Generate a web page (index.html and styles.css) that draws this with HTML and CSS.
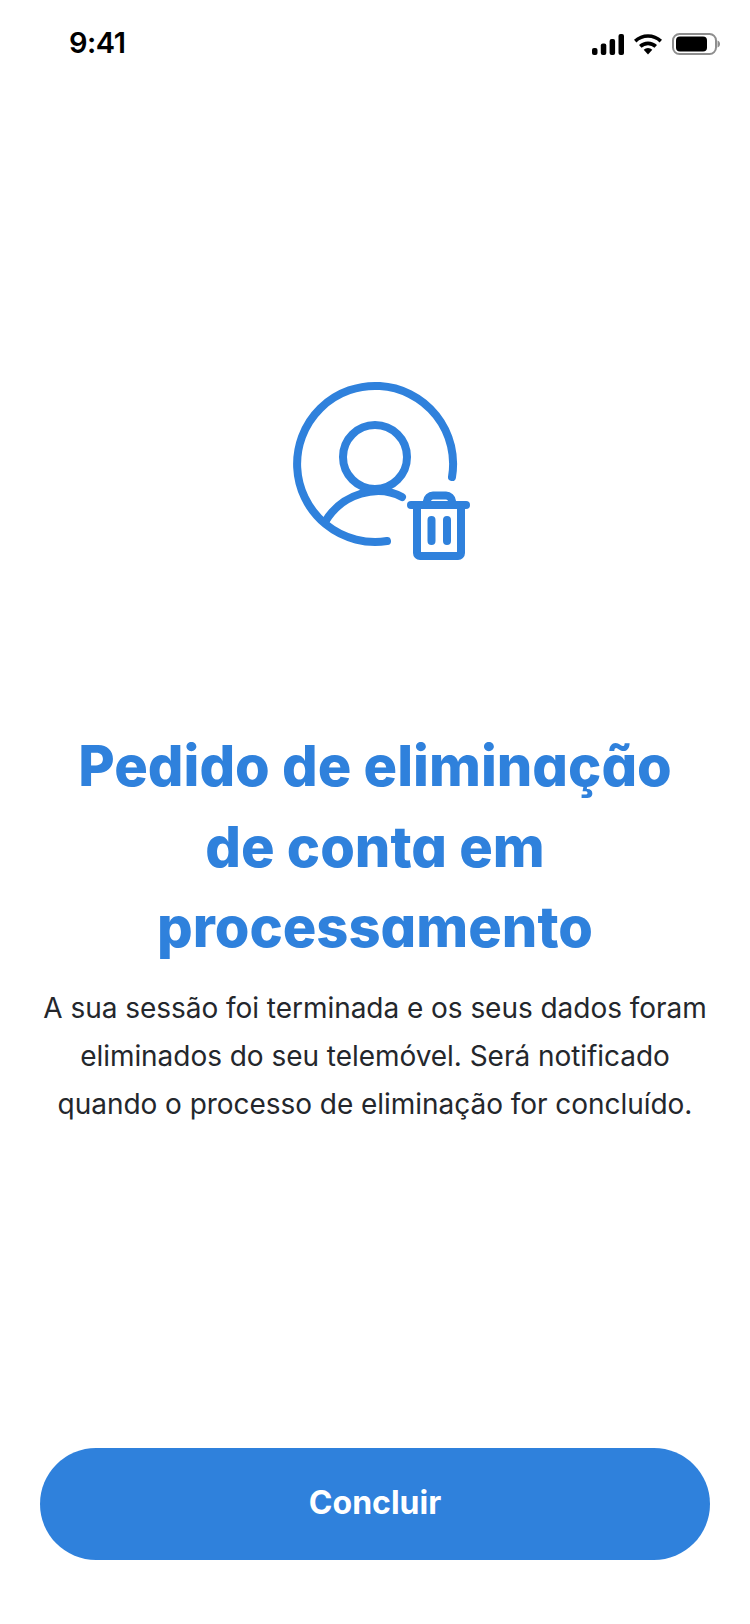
FILE: index.html
```html
<!DOCTYPE html>
<html lang="pt">
<head>
<meta charset="utf-8">
<title>Pedido de eliminação</title>
<link rel="stylesheet" href="styles.css">
</head>
<body>
<div class="screen">
  <header class="status">
    <span class="time">9:41</span>
    <div class="status-icons">
      <svg class="signal" width="32" height="21" viewBox="0 0 32 21"><rect x="0" y="14" width="5.500" height="7" rx="2"/><rect x="8.800" y="9.500" width="5.500" height="11.500" rx="2"/><rect x="17.600" y="5" width="5.500" height="16" rx="2"/><rect x="26.500" y="0" width="5.500" height="21" rx="2"/></svg>
      <svg class="wifi" width="28" height="22" viewBox="0 0 28 22"><path d="M14 21.500l-4.300-4.700a6.200 6.200 0 0 1 8.600 0z"/><path d="M0 6.800a20.400 20.400 0 0 1 28 0l-2.400 2.600a17 17 0 0 0-23.200 0z"/><path d="M5 12a13.200 13.200 0 0 1 18 0l-2.500 2.700a9.500 9.500 0 0 0-13 0z"/></svg>
      <svg class="battery" width="48" height="22" viewBox="0 0 48 22"><rect x="1" y="1" width="43" height="20" rx="6.500" fill="none" stroke="#8e8e8e" stroke-width="2"/><rect x="4" y="3.500" width="31" height="15" rx="4"/><path d="M45.500 7.500c1.500.4 2.500 1.800 2.500 3.500s-1 3.100-2.500 3.500z" fill="#8e8e8e"/></svg>
    </div>
  </header>
  <main class="content">
    <svg class="hero" width="210" height="210" viewBox="270 360 210 210" fill="none" stroke="#2f81dc" stroke-width="8" stroke-linecap="round" stroke-linejoin="round">
      <path d="M452 477A78 78 0 1 0 387 541"/>
      <circle cx="375" cy="457" r="32"/>
      <path d="M325 522C342 493 378 484 402 497"/>
      <path d="M411 505H466"/>
      <path d="M417 505V553A3 3 0 0 0 420 556H458A3 3 0 0 0 461 553V505"/>
      <path d="M427 505V501A6 6 0 0 1 433 495.500H446A6 6 0 0 1 452 501V505"/>
      <path d="M431.500 520V541M447 520V541"/>
    </svg>
    <h1 class="title">Pedido de eliminação<br>de conta em<br>processamento</h1>
    <p class="text">A sua sessão foi terminada e os seus dados foram<br>eliminados do seu telemóvel. Será notificado<br>quando o processo de eliminação for concluído.</p>
  </main>
  <button class="cta">Concluir</button>
</div>
</body>
</html>
```
FILE: styles.css
```css
* { box-sizing: border-box; }
html, body { margin: 0; padding: 0; background: #fff; }
.screen {
  width: 750px;
  height: 1624px;
  display: flex;
  flex-direction: column;
  font-family: Inter, "Liberation Sans", sans-serif;
  overflow: hidden;
}
.status {
  height: 88px;
  flex: none;
  display: flex;
  justify-content: space-between;
  align-items: flex-start;
  padding: 25px 30px 0 69px;
}
.time { font-size: 29px; font-weight: 600; line-height: 36px; letter-spacing: -0.5px; color: #000; }
.status-icons { display: flex; align-items: center; gap: 10px; padding-top: 8px; }
.status-icons svg { display: block; fill: #000; }
.content {
  flex: 1;
  display: flex;
  flex-direction: column;
  align-items: center;
  padding-top: 272px;
}
.hero { display: block; }
.title {
  margin: 156px 0 0;
  font-size: 56px;
  font-weight: 800;
  line-height: 80.5px;
  color: #2f81dc;
  text-align: center;
  font-feature-settings: "cv11";
}
.text {
  margin: 16px 0 0;
  font-size: 28px;
  font-weight: 400;
  line-height: 48px;
  letter-spacing: -0.04px;
  color: #24272c;
  text-align: center;
}
.cta {
  flex: none;
  align-self: center;
  width: 670px;
  height: 112px;
  margin-bottom: 64px;
  padding: 0 0 4px;
  border: 0;
  border-radius: 56px;
  background: #2f81dc;
  color: #fff;
  font-family: inherit;
  font-size: 32px;
  font-weight: 700;
}
```
